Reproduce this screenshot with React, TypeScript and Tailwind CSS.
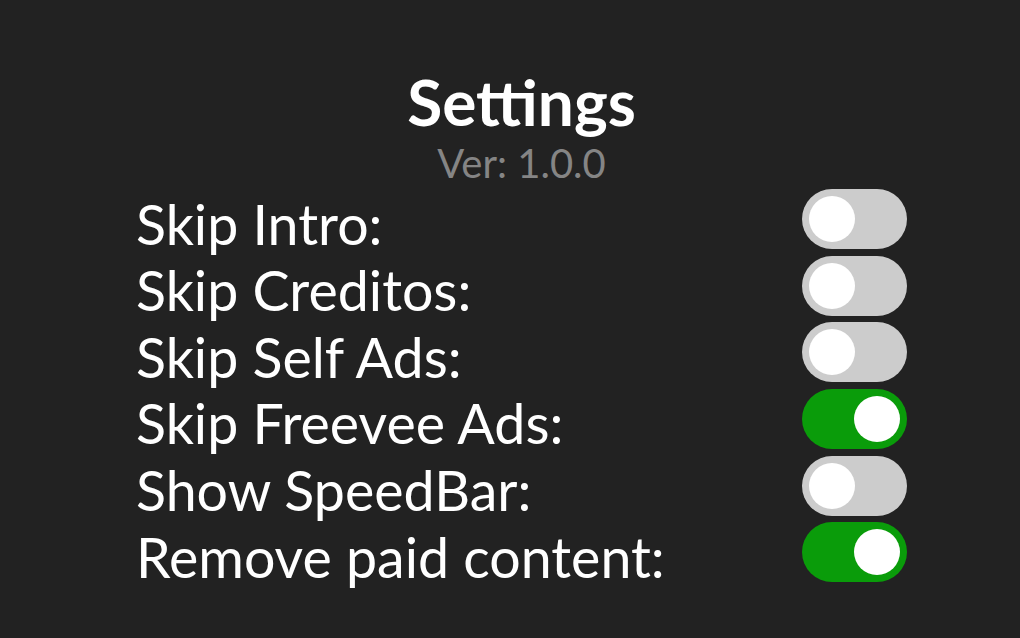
import React, { useState } from 'react';

const options = [
  { id: 'intro', label: 'Skip Intro:', on: false },
  { id: 'credits', label: 'Skip Creditos:', on: false },
  { id: 'selfAds', label: 'Skip Self Ads:', on: false },
  { id: 'freevee', label: 'Skip Freevee Ads:', on: true },
  { id: 'speedbar', label: 'Show SpeedBar:', on: false },
  { id: 'paid', label: 'Remove paid content:', on: true },
];

const Toggle: React.FC<{ checked: boolean; onChange: () => void }> = ({ checked, onChange }) => (
  <button
    type="button"
    onClick={onChange}
    className={`flex h-[60px] w-[105px] items-center rounded-full px-[7px] ${
      checked ? 'justify-end bg-[#0a9c0a]' : 'justify-start bg-[#cccccc]'
    }`}
  >
    <span className="block h-[46px] w-[46px] rounded-full bg-white" />
  </button>
);

const App: React.FC = () => {
  const [values, setValues] = useState<Record<string, boolean>>(
    Object.fromEntries(options.map(o => [o.id, o.on]))
  );

  return (
    <div
      className="min-h-[638px] w-full bg-[#222222] pt-[64px]"
      style={{ fontFamily: 'Lato, "Open Sans", sans-serif' }}
    >
      <div className="ml-[136px] w-[771px]">
        <h1 className="text-center text-[64px] font-bold leading-[76px] text-white">Settings</h1>
        <p className="text-center text-[40px] leading-[46px] text-[#858585]">Ver: 1.0.0</p>
        <div className="flex flex-col">
          {options.map(o => (
            <div key={o.id} className="flex h-[66.6px] items-center justify-between">
              <span className="pt-[8px] text-[55.5px] leading-none text-white">{o.label}</span>
              <Toggle
                checked={values[o.id]}
                onChange={() => setValues(v => ({ ...v, [o.id]: !v[o.id] }))}
              />
            </div>
          ))}
        </div>
      </div>
    </div>
  );
};

export default App;
